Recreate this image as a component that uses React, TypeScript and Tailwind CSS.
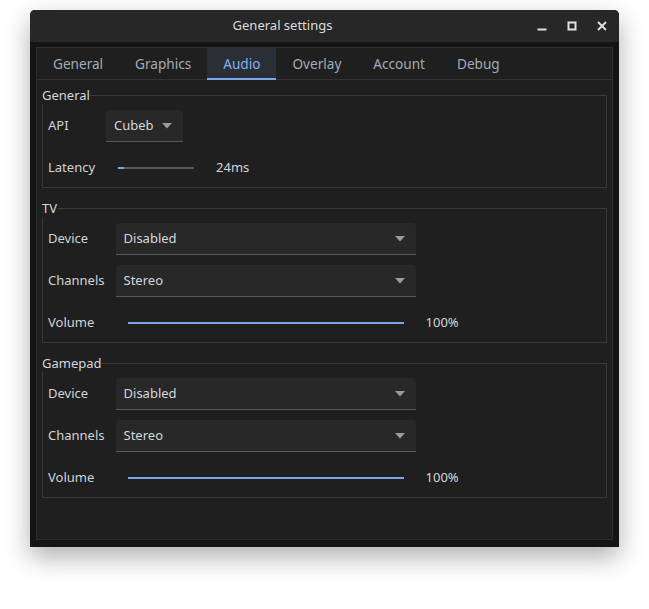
import React from "react";

const tabs = ["General", "Graphics", "Audio", "Overlay", "Account", "Debug"];

function Combo({ value, width }: { value: string; width: string }) {
  return (
    <div
      className={`${width} h-[32px] flex items-center justify-between pl-[8px] pr-[11px] bg-[#282828] border-b border-[#5a5a5a] rounded-t-[4px] text-[#d4d7db]`}
    >
      <span>{value}</span>
      <svg width="10" height="6" viewBox="0 0 10 6">
        <path d="M0 0 H10 L5 5.5 Z" fill="#9c9c9c" />
      </svg>
    </div>
  );
}

function Slider({ width, fill, label }: { width: string; fill: number; label: string }) {
  return (
    <div className="flex items-center h-[32px] gap-[10px]">
      <div className={`${width} h-[32px] flex items-center px-[12px]`}>
        <div className="relative flex-1 h-[2px] bg-[#5a5a5a]">
          <div className="absolute left-0 top-0 h-[2px] bg-[#7aa7ea]" style={{ width: `${fill}%` }} />
        </div>
      </div>
      <span className="text-[#d4d7db]">{label}</span>
    </div>
  );
}

function Group({ title, children }: { title: string; children: React.ReactNode }) {
  return (
    <fieldset className="border border-[#393939] px-[5px] pt-[6px] pb-[3px] m-0 min-w-0">
      <legend className="ml-[-6px] px-0 leading-[18px] text-[#d4d7db]">{title}</legend>
      <div className="grid grid-cols-[max-content_1fr] gap-x-[11px] gap-y-[10px] items-center">
        {children}
      </div>
    </fieldset>
  );
}

function Label({ children }: { children: React.ReactNode }) {
  return <span className="text-[#d0d3d7]">{children}</span>;
}

function OutputGroup({ title }: { title: string }) {
  return (
    <Group title={title}>
      <Label>Device</Label>
      <Combo value="Disabled" width="w-[300px]" />
      <Label>Channels</Label>
      <Combo value="Stereo" width="w-[300px]" />
      <Label>Volume</Label>
      <Slider width="w-[300px]" fill={100} label="100%" />
    </Group>
  );
}

export default function App() {
  return (
    <div
      className="w-[649px] h-[609px] bg-white pt-[10px] pl-[30px] text-[13px]"
      style={{ fontFamily: '"Noto Sans", "Open Sans", sans-serif' }}
    >
      <div className="w-[589px] h-[537px] flex flex-col rounded-t-[5px] bg-[#141414] shadow-[0_10px_26px_rgba(0,0,0,0.32)] overflow-hidden">
        {/* Title bar */}
        <div className="h-[32px] flex items-center bg-[#272727] shrink-0">
          <div className="flex-1 pl-[8px] text-center text-[#dcdcdc]">General settings</div>
          <div className="flex items-center pr-[2px]">
            <button className="w-[30px] h-[32px] flex items-center justify-center">
              <svg width="10" height="10" viewBox="0 0 10 10">
                <rect x="0.5" y="7.5" width="9" height="2" fill="#e2e2e2" />
              </svg>
            </button>
            <button className="w-[30px] h-[32px] flex items-center justify-center">
              <svg width="10" height="10" viewBox="0 0 10 10">
                <rect x="1.5" y="1.5" width="7" height="7" fill="none" stroke="#e2e2e2" strokeWidth="2" />
              </svg>
            </button>
            <button className="w-[30px] h-[32px] flex items-center justify-center">
              <svg width="10" height="10" viewBox="0 0 10 10">
                <path d="M1 1 L9 9 M9 1 L1 9" stroke="#e2e2e2" strokeWidth="1.8" />
              </svg>
            </button>
          </div>
        </div>

        {/* Body */}
        <div className="flex-1 pt-[5px] px-[6px] pb-[7px] flex">
          <div className="flex-1 flex flex-col border border-[#2e2e2e] bg-[#1f1f1f]">
            <div className="h-[32px] flex border-b border-[#333333] shrink-0 text-[13.6px]">
              {tabs.map((t) => (
                <div
                  key={t}
                  className={
                    t === "Audio"
                      ? "h-[32px] px-[16px] flex items-center bg-[#2a2e35] border-b-2 border-[#7aa7ea] text-[#86aef0] pt-[3px]"
                      : "h-[32px] px-[16px] flex items-center text-[#a3abb5] pt-[1px]"
                  }
                >
                  {t}
                </div>
              ))}
            </div>

            <div className="flex flex-col gap-[11px] pt-[6px] px-[5px]">
              <Group title="General">
                <Label>API</Label>
                <Combo value="Cubeb" width="w-[77px]" />
                <Label>Latency</Label>
                <Slider width="w-[100px]" fill={8} label="24ms" />
              </Group>
              <OutputGroup title="TV" />
              <OutputGroup title="Gamepad" />
            </div>
          </div>
        </div>
      </div>
    </div>
  );
}
